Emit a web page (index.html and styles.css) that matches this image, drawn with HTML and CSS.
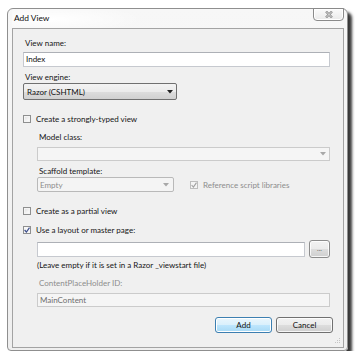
FILE: index.html
```html
<!DOCTYPE html>
<html>
<head>
<meta charset="utf-8">
<link rel="stylesheet" href="styles.css">
</head>
<body>
<div class="page">
  <div class="window">
    <div class="titlebar">
      <span class="title">Add View</span>
      <span class="close">
        <svg width="8" height="7" viewBox="0 0 8 7"><path d="M1 0.5 L7 6.5 M7 0.5 L1 6.5" stroke="#8a8a8a" stroke-width="2.4"/><path d="M1 0.5 L7 6.5 M7 0.5 L1 6.5" stroke="#f4f4f4" stroke-width="0.8"/></svg>
      </span>
    </div>
    <div class="client">
      <div class="label">View name:</div>
      <div class="textbox full mt3">Index</div>
      <div class="label mt4">View engine:</div>
      <div class="combo engine">
        <span>Razor (CSHTML)</span>
        <svg class="arrow" width="6" height="4" viewBox="0 0 6 4"><path d="M0 0 H6 L3 3.5 Z" fill="#222"/></svg>
      </div>
      <div class="check-row mt13"><span class="cb"></span><span>Create a strongly-typed view</span></div>
      <div class="sub">
        <div class="label mt6">Model class:</div>
        <div class="textbox dis modelbox mt4">
          <span></span>
          <svg class="arrow" width="6" height="4" viewBox="0 0 6 4"><path d="M0 0 H6 L3 3.5 Z" fill="#a8a8a8"/></svg>
        </div>
        <div class="label mt4">Scaffold template:</div>
        <div class="row scaffold-row">
          <div class="combo dis scaffold">
            <span>Empty</span>
            <svg class="arrow" width="6" height="4" viewBox="0 0 6 4"><path d="M0 0 H6 L3 3.5 Z" fill="#a8a8a8"/></svg>
          </div>
          <div class="check-row dis-text ref">
            <span class="cb checked dis">
              <svg width="6" height="6" viewBox="0 0 6 6"><path d="M0.6 3 L2.4 5 L5.5 0.6" fill="none" stroke="#a0a0a0" stroke-width="1.1"/></svg>
            </span>
            <span>Reference script libraries</span>
          </div>
        </div>
      </div>
      <div class="check-row mt13"><span class="cb"></span><span>Create as a partial view</span></div>
      <div class="check-row mt7">
        <span class="cb checked">
          <svg width="6" height="6" viewBox="0 0 6 6"><path d="M0.6 3 L2.4 5 L5.5 0.6" fill="none" stroke="#3d4f8c" stroke-width="1.2"/></svg>
        </span>
        <span>Use a layout or master page:</span>
      </div>
      <div class="sub">
        <div class="row browse-row mt4">
          <div class="textbox layoutbox"></div>
          <div class="btn browse">...</div>
        </div>
        <div class="note">(Leave empty if it is set in a Razor _viewstart file)</div>
        <div class="label dis-text mt6">ContentPlaceHolder ID:</div>
        <div class="textbox dis full mt4 maincontent">MainContent</div>
      </div>
      <div class="buttons">
        <div class="btn default">Add</div>
        <div class="btn">Cancel</div>
      </div>
      <svg class="grip" width="6" height="6" viewBox="0 0 6 6">
        <rect x="4" y="0" width="1" height="1" fill="#c4c4c4"/>
        <rect x="2" y="2" width="1" height="1" fill="#c4c4c4"/>
        <rect x="4" y="2" width="1" height="1" fill="#c4c4c4"/>
        <rect x="0" y="4" width="1" height="1" fill="#c4c4c4"/>
        <rect x="2" y="4" width="1" height="1" fill="#c4c4c4"/>
        <rect x="4" y="4" width="1" height="1" fill="#c4c4c4"/>
      </svg>
    </div>
  </div>
</div>
</body>
</html>
```

FILE: styles.css
```css
html, body {
  margin: 0;
  padding: 0;
  background: #ffffff;
}
body {
  font-family: "Lato", "Open Sans", sans-serif;
  font-size: 8px;
  color: #151515;
}
.page {
  padding: 8px 0 0 7px;
}
.window {
  box-sizing: border-box;
  width: 341px;
  height: 343px;
  border: 1px solid #8f8f8f;
  border-radius: 6px 6px 4px 4px;
  background: linear-gradient(180deg, #f7f7f7 0%, #efefef 100%);
  box-shadow: 4px 4px 3px rgba(0, 0, 0, 0.78);
  padding: 0 3px 2px 4px;
  display: flex;
  flex-direction: column;
}
.titlebar {
  height: 19px;
  display: flex;
  justify-content: space-between;
  align-items: flex-start;
  background: radial-gradient(ellipse 90px 14px at 40px 10px, #ffffff 0%, rgba(255,255,255,0) 100%);
}
.title {
  padding: 3px 0 0 2px;
  line-height: 12px;
  font-size: 8.4px;
  color: #111;
}
.close {
  box-sizing: border-box;
  width: 31px;
  height: 13px;
  margin-top: -1px;
  border: 1px solid #8a8a8a;
  border-radius: 0 0 4px 4px;
  background: linear-gradient(180deg, #fbfbfb 0%, #eaeaea 100%);
  box-shadow: inset 0 0 0 1px #ffffff;
  display: flex;
  align-items: center;
  justify-content: center;
}
.client {
  position: relative;
  box-sizing: border-box;
  height: 320px;
  border: 1px solid #a3a3a3;
  background: #f0f0f0;
  padding: 8px 12px 0 10px;
  display: flex;
  flex-direction: column;
  align-items: flex-start;
}
.label {
  height: 12px;
  line-height: 12px;
  padding-left: 2px;
}
.mt3 { margin-top: 3px; }
.mt4 { margin-top: 4px; }
.mt6 { margin-top: 6px; }
.mt7 { margin-top: 7px; }
.mt13 { margin-top: 13px; }
.textbox {
  box-sizing: border-box;
  height: 15px;
  line-height: 13px;
  border: 1px solid #c6c9cf;
  border-top-color: #adb0b6;
  background: #ffffff;
  padding-left: 2px;
  color: #111;
}
.full {
  width: 307px;
  align-self: stretch;
}
.textbox.dis {
  background: #f5f5f5;
  border-color: #cbcbcb;
  height: 14px;
  line-height: 12px;
}
.maincontent {
  width: 293px;
  color: #6e6e6e;
}
.combo {
  box-sizing: border-box;
  display: flex;
  align-items: center;
  justify-content: space-between;
  border: 1px solid #707070;
  border-radius: 2px;
  background: linear-gradient(180deg, #f3f3f3 0%, #ebebeb 50%, #dddddd 51%, #d0d0d0 100%);
  padding: 0 3px 0 3px;
  color: #111;
}
.engine {
  width: 154px;
  height: 17px;
}
.arrow {
  display: block;
}
.sub {
  margin-left: 14px;
  display: flex;
  flex-direction: column;
  align-items: flex-start;
}
.modelbox {
  width: 293px;
  display: flex;
  align-items: center;
  justify-content: space-between;
  padding-right: 3px;
}
.row {
  display: flex;
  align-items: center;
}
.scaffold {
  width: 137px;
  height: 15px;
  background: #f4f4f4;
  border-color: #b9b9b9;
  color: #8d8d8d;
  padding-left: 2px;
  padding-right: 4px;
}
.check-row {
  display: flex;
  align-items: center;
  height: 12px;
  line-height: 12px;
}
.cb {
  box-sizing: border-box;
  width: 8px;
  height: 8px;
  margin-right: 5px;
  border: 1px solid #8e8f8f;
  background: linear-gradient(135deg, #dcdcdc 0%, #f4f4f4 60%, #ffffff 100%);
  box-shadow: inset 0 0 0 1px #f4f4f4;
  display: flex;
  align-items: center;
  justify-content: center;
}
.cb.checked {
  background: #f6f6f6;
  box-shadow: none;
}
.cb.dis {
  border-color: #bdbdbd;
  background: #f4f4f4;
}
.dis-text {
  color: #8d8d8d;
}
.ref {
  margin-left: 16px;
}
.browse-row {
  height: 18px;
}
.layoutbox {
  width: 268px;
  height: 15px;
}
.btn {
  box-sizing: border-box;
  border: 1px solid #707070;
  border-radius: 3px;
  background: linear-gradient(180deg, #f2f2f2 0%, #ebebeb 50%, #dddddd 51%, #cfcfcf 100%);
  box-shadow: inset 0 0 0 1px rgba(255,255,255,0.8);
  display: flex;
  align-items: center;
  justify-content: center;
  color: #111;
}
.browse {
  width: 21px;
  height: 18px;
  margin-left: 4px;
  color: #666;
  font-size: 7px;
  line-height: 10px;
  padding-bottom: 2px;
  border-color: #8c8c8c;
}
.note {
  margin-top: 1px;
  height: 12px;
  line-height: 12px;
}
.buttons {
  margin-top: 10px;
  align-self: flex-end;
  margin-right: -2px;
  display: flex;
  gap: 4px;
}
.buttons .btn {
  width: 57px;
  height: 16px;
}
.btn.default {
  border-color: #3c7fb1;
  background: linear-gradient(180deg, #eaf6fd 0%, #d9f0fc 50%, #bee6fd 51%, #a7d9f5 100%);
  box-shadow: inset 0 0 0 1px #ffffff;
}
.grip {
  position: absolute;
  right: 2px;
  bottom: 3px;
}
```
